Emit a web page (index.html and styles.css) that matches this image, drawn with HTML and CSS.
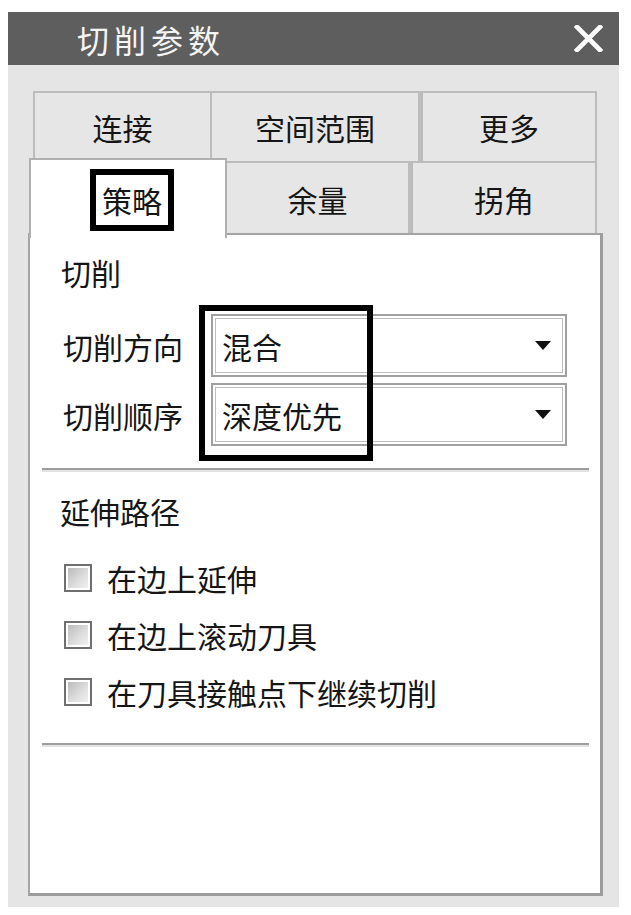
FILE: index.html
```html
<!DOCTYPE html>
<html lang="zh-CN">
<head>
<meta charset="utf-8">
<title>切削参数</title>
<link rel="stylesheet" href="styles.css">
</head>
<body>
<div class="window">
  <div class="titlebar">
    <span class="title">切削参数</span>
    <svg class="close" width="29" height="27" viewBox="0 0 29 27"><path d="M3 2 L26 25 M26 2 L3 25" stroke="#fff" stroke-width="4.6" stroke-linecap="square" fill="none"/></svg>
  </div>
  <div class="wbody">
    <div class="tabrow row1">
      <div class="tab t1">连接</div>
      <div class="tab t2">空间范围</div>
      <div class="tab t3">更多</div>
    </div>
    <div class="tabrow row2">
      <div class="tab active"><span class="mark">策略</span></div>
      <div class="tab t5">余量</div>
      <div class="tab t6">拐角</div>
    </div>
    <div class="panel">
      <div class="section">
        <div class="heading h1">切削</div>
        <div class="fields">
          <div class="field">
            <span class="label">切削方向</span>
            <div class="combo"><span>混合</span><span class="arrow"></span></div>
          </div>
          <div class="field">
            <span class="label">切削顺序</span>
            <div class="combo"><span>深度优先</span><span class="arrow"></span></div>
          </div>
          <div class="highlight"></div>
        </div>
      </div>
      <div class="sep"></div>
      <div class="section s2">
        <div class="heading h2">延伸路径</div>
        <div class="checks">
          <label class="check"><span class="box"></span>在边上延伸</label>
          <label class="check"><span class="box"></span>在边上滚动刀具</label>
          <label class="check"><span class="box"></span>在刀具接触点下继续切削</label>
        </div>
      </div>
      <div class="sep sep2"></div>
    </div>
  </div>
</div>
</body>
</html>
```

FILE: styles.css
```css
html, body {
  margin: 0;
  padding: 0;
  background: #ffffff;
}
body {
  font-family: "Noto Sans CJK SC", "Microsoft YaHei", sans-serif;
  color: #161616;
}
.window {
  margin: 12px 0 0 8px;
  width: 611px;
}
.titlebar {
  height: 53px;
  background: #5e5e5e;
  display: flex;
  align-items: center;
  justify-content: space-between;
  padding: 0 16px 0 69px;
  box-sizing: border-box;
}
.title {
  color: #f4f4f4;
  font-size: 32px;
  line-height: 40px;
  letter-spacing: 5px;
}
.close {
  display: block;
}
.wbody {
  background: #e5e5e5;
  height: 842px;
  padding: 26px 0 0 20px;
  box-sizing: border-box;
}
.tabrow {
  display: flex;
}
.tab {
  display: flex;
  align-items: center;
  justify-content: center;
  box-sizing: border-box;
  font-size: 30px;
  background: #e6e6e6;
  border: 2px solid #bcbcbc;
}
.row1 {
  margin-left: 5px;
  height: 72px;
}
.row1 .tab {
  height: 72px;
}
.t1 { width: 179px; }
.t2 { width: 208px; border-left: none; }
.t3 { width: 177px; border-left: 3px solid #bcbcbc; }
.row2 {
  margin-left: 1px;
  height: 72px;
  align-items: flex-start;
}
.row2 .tab {
  height: 72px;
  border-top: none;
  border-bottom: none;
}
.tab.active {
  position: relative;
  z-index: 2;
  width: 198px;
  height: 80px;
  margin-top: -5px;
  background: #ffffff;
  border: 2px solid #b0b0b0;
  border-bottom: none;
  align-items: flex-start;
  padding-top: 9px;
  padding-left: 8px;
}
.mark {
  display: block;
  border: 6px solid #000;
  padding: 0 6px;
  height: 50px;
  line-height: 50px;
  background: #fff;
}
.t5 { width: 183px; border-left: none !important; }
.t6 { width: 187px; border-left: 3px solid #bcbcbc; }
.panel {
  position: relative;
  z-index: 1;
  width: 575px;
  height: 663px;
  box-sizing: border-box;
  background: #ffffff;
  border: 2px solid #a4a4a4;
  border-right-width: 3px;
  border-bottom-width: 3px;
  border-right-color: #9c9c9c;
  border-bottom-color: #9c9c9c;
  margin-top: -2px;
}
.section {
  padding-left: 31px;
}
.heading {
  font-size: 30px;
  line-height: 40px;
}
.h1 {
  padding-top: 17px;
}
.fields {
  position: relative;
  margin-top: 22px;
  display: flex;
  flex-direction: column;
  gap: 6px;
}
.field {
  display: flex;
  align-items: center;
}
.label {
  width: 150px;
  font-size: 30px;
  line-height: 40px;
  padding-left: 2px;
  box-sizing: border-box;
}
.combo {
  width: 356px;
  height: 63px;
  box-sizing: border-box;
  border: 2px solid #a0a0a0;
  box-shadow: inset 0 0 0 2px #fff, inset 0 0 0 3px #bdbdbd;
  display: flex;
  align-items: center;
  justify-content: space-between;
  padding: 0 14px 0 9px;
  font-size: 30px;
}
.arrow {
  width: 0;
  height: 0;
  border-left: 8px solid transparent;
  border-right: 8px solid transparent;
  border-top: 9px solid #111;
}
.highlight {
  position: absolute;
  left: 138px;
  top: -9px;
  width: 174px;
  height: 156px;
  box-sizing: border-box;
  border: 6px solid #000;
  pointer-events: none;
}
.sep {
  margin: 22px 11px 0 12px;
  height: 2px;
  background: #9e9e9e;
  border-bottom: 2px solid #e2e2e2;
}
.s2 {
  padding-left: 30px;
}
.h2 {
  padding-top: 19px;
}
.checks {
  margin-top: 27px;
  display: flex;
  flex-direction: column;
  gap: 17px;
}
.check {
  display: flex;
  align-items: center;
  font-size: 30px;
  line-height: 40px;
  gap: 15px;
  padding-left: 4px;
}
.box {
  width: 28px;
  height: 28px;
  box-sizing: border-box;
  border: 2px solid #6f6f6f;
  box-shadow: inset 0 0 0 2px #fff;
  background: linear-gradient(135deg, #b5b5b5 0%, #e0e0e0 60%, #f4f4f4 100%);
}
.sep2 {
  margin-top: 31px;
}
```
